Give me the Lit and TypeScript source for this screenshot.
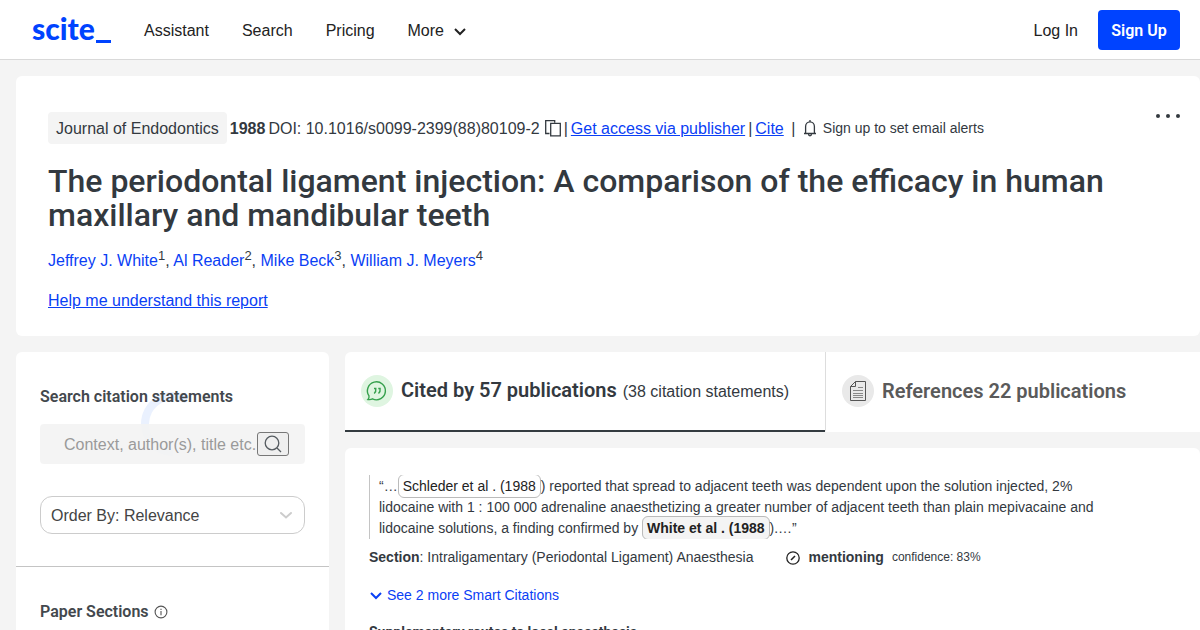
import { LitElement, html, css } from "lit";
import { customElement } from "lit/decorators.js";

@customElement("app-root")
export class AppRoot extends LitElement {
  static styles = css`
    :host {
      display: block;
      min-height: 100vh;
      background: #f4f4f4;
      color: #33393f;
      font: 16px/24px "Liberation Sans", Arial, sans-serif;
    }
    * { box-sizing: border-box; }
    h1, h2, h3, p, blockquote { margin: 0; }
    button, input, select { font: inherit; color: inherit; margin: 0; }
    svg { display: block; flex: none; }
    a { color: #0a40f5; }
    .page { overflow: hidden; height: 100vh; }
    .nav {
      display: flex;
      align-items: center;
      height: 60px;
      padding: 0 20px 0 32px;
      background: #fff;
      border-bottom: 1px solid #d9d9d9;
      color: #222;
    }
    .logo {
      width: 80px;
      margin-right: 32px;
      padding-bottom: 4px;
      color: #0043ff;
      font: 900 30px/32px Lato, sans-serif;
      text-decoration: none;
      white-space: nowrap;
    }
    .bar {
      display: inline-block;
      width: 15px;
      height: 3px;
      margin-left: 1px;
      vertical-align: -3px;
      background: currentColor;
    }
    .menu { display: flex; gap: 33px; flex: 1; }
    .plain { padding-top: 2px; color: inherit; text-decoration: none; }
    .more, .bare {
      display: flex;
      align-items: center;
      gap: 8px;
      padding: 0;
      border: 0;
      background: none;
    }
    .more { padding-top: 2px; }
    .signup {
      min-width: 82px;
      height: 40px;
      margin-left: 20px;
      padding: 2px 12px 0;
      border: 0;
      border-radius: 4px;
      background: #0043ff;
      color: #fff;
      font: 600 16px/24px Roboto, sans-serif;
    }
    .card { background: #fff; border-radius: 6px; }
    .head { margin: 16px 0 16px 16px; padding: 36px 20px 23px 32px; }
    .meta { display: flex; align-items: center; gap: 4px; }
    .info { flex: 1; display: flex; align-items: center; gap: 3px; white-space: nowrap; }
    .info > a, .info > b, .info > span { padding-top: 2px; }
    .info > .pill {
      padding: 5px 8px 3px;
      border-radius: 4px;
      background: #f4f4f4;
    }
    .doi { display: flex; align-items: center; gap: 5px; }
    .alert { font-size: 14px; gap: 6px; }
    .dots { align-self: flex-start; }
    .title {
      margin: 20px 0 17px;
      max-width: 1080px;
      font: 500 32px/34px Roboto, sans-serif;
    }
    .authors a { text-decoration: none; }
    sup { font-size: 13px; line-height: 0; }
    .help { margin-top: 16px; }
    .cols { display: grid; grid-template-columns: 313px minmax(0, 1fr); gap: 16px; padding-left: 16px; }
    .side { position: relative; min-height: 400px; }
    .spin { position: absolute; top: 40px; left: 50%; margin-left: -32px; }
    .block { position: relative; padding: 33px 24px 32px; }
    .block + .block { border-top: 1px solid #c4c4c4; }
    .label { display: block; font: 600 16px/24px Roboto, sans-serif; color: #43484d; }
    .search {
      display: flex;
      align-items: center;
      height: 40px;
      margin: 15px 0 32px;
      padding: 0 16px 0 24px;
      border-radius: 4px;
      background: rgba(243, 243, 243, 0.9);
    }
    .search input { flex: 1; min-width: 0; padding: 2px 0 0; border: 0; outline: 0; background: none; }
    .search input::placeholder { color: #9a9a9a; }
    .go {
      display: grid;
      place-items: center;
      width: 32px;
      height: 24px;
      padding: 0;
      border: 1px solid #777;
      border-radius: 3px;
      background: #efefef;
    }
    .order { position: relative; display: block; }
    .order select {
      appearance: none;
      display: block;
      width: 100%;
      height: 38px;
      padding: 2px 10px 0;
      border: 1px solid #ccc;
      border-radius: 12px;
      background: #fff;
      color: #444;
    }
    .order svg { position: absolute; right: 12px; top: 12px; pointer-events: none; }
    .row { display: flex; align-items: center; gap: 5px; }
    .tabs { display: flex; margin-bottom: 16px; background: #fff; border-radius: 6px 0 0 0; }
    .tab {
      display: flex;
      align-items: center;
      gap: 8px;
      height: 80px;
      padding: 0 16px;
      border: 0;
      border-bottom: 2px solid transparent;
      background: none;
      white-space: nowrap;
    }
    .tab.on { flex: 0 0 480px; border-bottom-color: #333b40; }
    .tab + .tab { border-left: 1px solid #ddd; color: #5a5a5a; }
    .count { display: flex; align-items: baseline; gap: 6px; }
    .big { font: 600 20px/24px Roboto, sans-serif; }
    .cites { padding: 27px 24px; font-size: 14px; line-height: 21px; }
    .quote { max-width: 745px; padding: 1px 0 0 9px; border-left: 1px solid #c4c4c4; overflow: hidden; }
    .ref {
      padding: 3px 4px;
      border: 1px solid #bbb;
      border-radius: 6px;
      color: #222;
      text-decoration: none;
    }
    .ref.cur { background: #f4f4f4; font-weight: 700; }
    .sect { display: flex; align-items: center; margin: 8px 0 17px; }
    .kind { display: flex; align-items: center; gap: 8px; margin-left: 33px; }
    .conf { font-size: 12px; }
    .see { color: #0a40f5; gap: 4px; }
    .next { margin-top: 16px; font: 700 14px/21px Roboto, sans-serif; }
  `;

  render() {
    return html`
      <div class="page">
        <header class="nav">
          <a class="logo" href="#">scite<span class="bar"></span></a>
          <nav class="menu">
            <a class="plain" href="#">Assistant</a>
            <a class="plain" href="#">Search</a>
            <a class="plain" href="#">Pricing</a>
            <button class="more">More
              <svg width="16" height="16" viewBox="0 0 16 16" fill="none" stroke="#222" stroke-width="2"><path d="M3 6l5 5 5-5" /></svg>
            </button>
          </nav>
          <a class="plain" href="#">Log In</a>
          <button class="signup">Sign Up</button>
        </header>

        <section class="card head">
          <div class="meta">
            <div class="info">
              <span class="pill">Journal of Endodontics</span>
              <b>1988</b>
              <span class="doi">DOI: 10.1016/s0099-2399(88)80109-2
                <svg width="16" height="18" viewBox="1 1 16 18" fill="none" stroke="#33393f" stroke-width="1.3"><path d="M5.500 14.500H1.700V1.700h9v2" /><path d="M6.700 4.300h9.600v12.500H6.700z" /></svg>
              </span>
              <span>|</span>
              <a href="#">Get access via publisher</a>
              <span>|</span>
              <a href="#">Cite</a>
              <span>&nbsp;|&nbsp;</span>
              <button class="bare alert">
                <svg width="14" height="18" viewBox="1 0 14 18" fill="none" stroke="#33393f" stroke-width="1.3"><path d="M2 14.500h12M3.600 14.500V7.600a4.400 4.800 0 0 1 8.800 0v6.900M8 2.800V1M6.500 14.800a1.500 2 0 0 0 3 0" /></svg>
                Sign up to set email alerts
              </button>
            </div>
            <button class="bare dots" aria-label="More actions">
              <svg width="24" height="8" viewBox="0 0 24 8" fill="#33393f"><circle cx="2" cy="4" r="2" /><circle cx="12" cy="4" r="2" /><circle cx="22" cy="4" r="2" /></svg>
            </button>
          </div>
          <h1 class="title">The periodontal ligament injection: A comparison of the efficacy in human maxillary and mandibular teeth</h1>
          <p class="authors"><a href="#">Jeffrey J. White</a><sup>1</sup>, <a href="#">Al Reader</a><sup>2</sup>, <a href="#">Mike Beck</a><sup>3</sup>, <a href="#">William J. Meyers</a><sup>4</sup></p>
          <p class="help"><a href="#">Help me understand this report</a></p>
        </section>

        <main class="cols">
          <aside class="card side">
            <svg class="spin" width="64" height="64" viewBox="0 0 64 64" fill="none" stroke="#eaf1fe" stroke-width="8"><path d="M4 32A28 28 0 0 1 46 7.800" /><path d="M4 32A28 28 0 0 0 32 60" /></svg>
            <div class="block">
              <label class="label" for="q">Search citation statements</label>
              <div class="search">
                <input id="q" type="text" placeholder="Context, author(s), title etc." />
                <button class="go" aria-label="Search">
                  <svg width="18" height="18" viewBox="0 0 18 18" fill="none" stroke="#555b60" stroke-width="1.3"><circle cx="8" cy="8" r="6.800" /><path d="M13 13l4 4" /></svg>
                </button>
              </div>
              <label class="order">
                <select aria-label="Order by"><option>Order By: Relevance</option></select>
                <svg width="14" height="14" viewBox="0 0 14 14" fill="none" stroke="#ccc" stroke-width="2" stroke-linecap="round"><path d="M2 5l5 4.500L12 5" /></svg>
              </label>
            </div>
            <div class="block">
              <div class="row">
                <h3 class="label">Paper Sections</h3>
                <svg width="14" height="14" viewBox="0 0 14 14" fill="none" stroke="#555" stroke-width="1.1"><circle cx="7" cy="7" r="5.900" /><path d="M7 6v4.300M7 3.700v1.200" /></svg>
              </div>
            </div>
          </aside>

          <div>
            <div class="tabs">
              <button class="tab on">
                <svg width="32" height="32" viewBox="0 0 32 32" fill="none" stroke="#35a04c" stroke-width="1.4"><circle cx="16" cy="16" r="16" fill="#dff5e1" stroke="none" /><path d="M7 24.500c.9-.9 1.200-2 1-3.600A9 9 0 1 1 11.500 23.900c-1.300.700-2.700.900-4.500.600z" /><path d="M13 13.500h1.800c.3 2-.2 3.700-1.600 5M17.300 13.500h1.800c.3 2-.2 3.700-1.600 5" /></svg>
                <span class="count"><span class="big">Cited by 57 publications</span><span>(38 citation statements)</span></span>
              </button>
              <button class="tab">
                <svg width="32" height="32" viewBox="0 0 32 32" fill="none" stroke="#555"><circle cx="16" cy="16" r="16" fill="#e9e9e9" stroke="none" /><path d="M13.500 6.500h10v19h-15v-14zM13.500 6.500v5h-5" /><path d="M16 12.500h5M11 15.500h10M11 18.500h10M11 20.500h10M11 22.500h10" stroke="#888" /></svg>
                <span class="big">References 22 publications</span>
              </button>
            </div>
            <section class="card cites">
              <blockquote class="quote">“…<a class="ref" href="#">Schleder et al . (1988</a>) reported that spread to adjacent teeth was dependent upon the solution injected, 2% lidocaine with 1 : 100 000 adrenaline anaesthetizing a greater number of adjacent teeth than plain mepivacaine and lidocaine solutions, a finding confirmed by <a class="ref cur" href="#">White et al . (1988</a>).…”</blockquote>
              <div class="sect">
                <span><b>Section</b>: Intraligamentary (Periodontal Ligament) Anaesthesia</span>
                <span class="kind">
                  <svg width="14" height="14" viewBox="0 0 14 14" fill="none" stroke="#222" stroke-width="1.3"><circle cx="7" cy="7" r="6.200" /><path d="M5 9l4-4" stroke-width="1.600" /></svg>
                  <b>mentioning</b><span class="conf">confidence: 83%</span>
                </span>
              </div>
              <button class="bare see">
                <svg width="14" height="14" viewBox="0 0 14 14" fill="none" stroke="#0a40f5" stroke-width="2"><path d="M2 4l5 5 5-5" /></svg>
                See 2 more Smart Citations
              </button>
              <h3 class="next">Supplementary routes to local anaesthesia</h3>
            </section>
          </div>
        </main>
      </div>
    `;
  }
}
